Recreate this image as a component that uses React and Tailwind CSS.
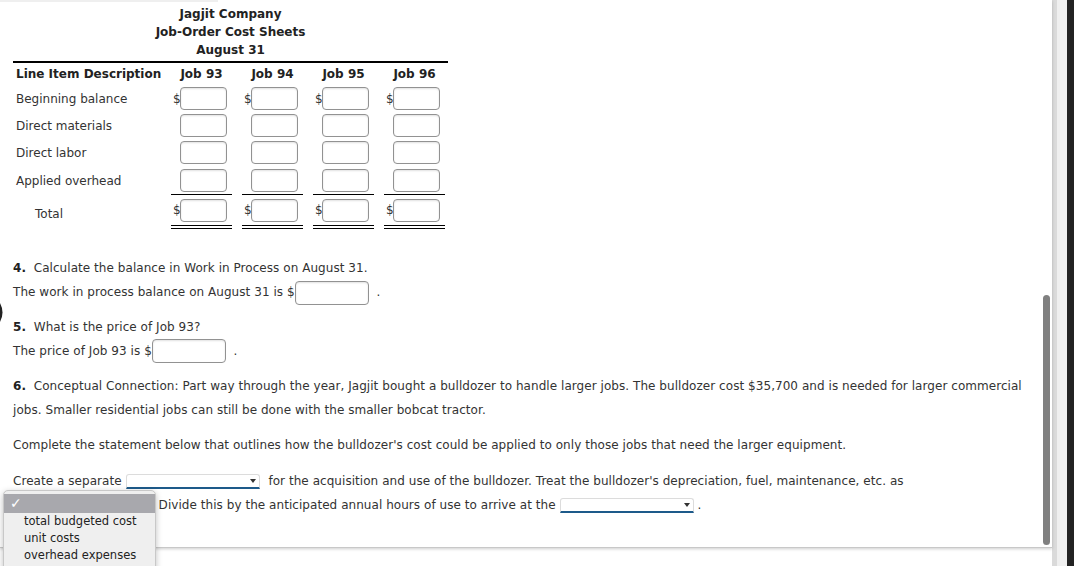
import React from 'react';

const jobs = ['Job 93', 'Job 94', 'Job 95', 'Job 96'];
const rows = [
  { label: 'Beginning balance', dollar: true, h: 'h-[27px]' },
  { label: 'Direct materials', h: 'h-[27px]' },
  { label: 'Direct labor', h: 'h-[27px]' },
  { label: 'Applied overhead', h: 'h-[29px]', line: true },
];

function Cell({ dollar }) {
  return (
    <div className="flex h-full items-center pl-[2px]">
      <span className="w-[7px] leading-none">{dollar ? '$' : ''}</span>
      <span className="block h-[23px] w-[47px] rounded-[4px] border border-[#929292] bg-white shadow-[inset_0_1px_2px_rgba(0,0,0,0.12)]" />
    </div>
  );
}

function Field({ w }) {
  return (
    <span
      className={`inline-block h-[24px] ${w} rounded-[4px] border border-[#929292] bg-white align-middle shadow-[inset_0_1px_2px_rgba(0,0,0,0.12)]`}
    />
  );
}

function Sel({ extra = '' }) {
  return (
    <span
      className={`relative inline-block h-[15px] w-[134px] rounded-t-[3px] border border-[#dcdcdc] border-b-2 border-b-[#1d5a8a] bg-white align-middle ${extra}`}
    >
      <span className="absolute right-[3px] top-[4px] h-0 w-0 border-x-[3.5px] border-t-[4px] border-x-transparent border-t-[#333]" />
    </span>
  );
}

export default function App() {
  return (
    <div className="relative flex h-[566px] w-[1074px] overflow-hidden bg-white font-['DejaVu_Sans',sans-serif] text-[12px] text-[#333]">
      <div className="flex w-[1052px] flex-col">
        <div className="relative h-[548px] border-b border-[#c8c8c8] pl-[13px] shadow-[0_1px_3px_rgba(0,0,0,0.2)]">
          {/* cost sheet */}
          <div className="w-[437px]">
            <div className="w-[435px] pt-[5px] text-center font-bold leading-[18px] text-[#222]">
              <div>Jagjit Company</div>
              <div>Job-Order Cost Sheets</div>
              <div>August 31</div>
            </div>
            <div className="mt-[2px] w-[435px] border-t-2 border-black" />
            <div className="flex h-[22px] items-center font-bold text-[#222]">
              <div className="w-[153px] pl-[3px]">Line Item Description</div>
              {jobs.map((j) => (
                <div key={j} className="w-[71px] px-[5px] text-center">
                  {j}
                </div>
              ))}
            </div>
            {rows.map((r) => (
              <div key={r.label} className={`flex ${r.h}`}>
                <div className="flex w-[153px] items-center pl-[3px]">{r.label}</div>
                {jobs.map((j) => (
                  <div key={j} className="w-[71px] px-[5px]">
                    <div className={`h-full ${r.line ? 'border-b border-black' : ''}`}>
                      <Cell dollar={r.dollar} />
                    </div>
                  </div>
                ))}
              </div>
            ))}
            <div className="flex h-[34px]">
              <div className="flex w-[153px] items-center pl-[22px] pt-[3px]">Total</div>
              {jobs.map((j) => (
                <div key={j} className="w-[71px] px-[5px]">
                  <div className="h-full border-b-4 border-double border-black">
                    <Cell dollar />
                  </div>
                </div>
              ))}
            </div>
          </div>

          {/* questions */}
          <div className="mt-[27px] leading-[24px] tracking-[0.05px]">
            <div>
              <b className="text-[#222]">4.</b>&nbsp; Calculate the balance in Work in Process on August 31.
            </div>
            <div>
              The work in process balance on August 31 is $<Field w="w-[74px]" />&nbsp; .
            </div>
          </div>

          <div className="mt-[10px] leading-[24px] tracking-[0.05px]">
            <div>
              <b className="text-[#222]">5.</b>&nbsp; What is the price of Job 93?
            </div>
            <div>
              The price of Job 93 is $<Field w="w-[74px]" />&nbsp; .
            </div>
          </div>

          <div className="mt-[11px] leading-[24px] tracking-[0.05px]">
            <b className="text-[#222]">6.</b>&nbsp; Conceptual Connection: Part way through the year, Jagjit bought a bulldozer to handle
            larger jobs. The bulldozer cost $35,700 and is needed for larger commercial
            <br />
            jobs. Smaller residential jobs can still be done with the smaller bobcat tractor.
          </div>

          <div className="mt-[11px] leading-[24px] tracking-[0.05px]">
            Complete the statement below that outlines how the bulldozer's cost could be applied to only those jobs that need
            the larger equipment.
          </div>

          <div className="mt-[12px] leading-[24px] tracking-[0.05px]">
            Create a separate <Sel extra="mr-[5px]" /> for the acquisition and use of the bulldozer. Treat the bulldozer's
            depreciation, fuel, maintenance, etc. as
            <br />
            <Sel /> . Divide this by the anticipated annual hours of use to arrive at the <Sel /> .
          </div>

          {/* scrollbar thumb */}
          <div className="absolute right-[2px] top-[295px] h-[250px] w-[7px] rounded-full bg-[#808080]" />
        </div>
      </div>

      {/* right gutter */}
      <div className="flex w-[22px]">
        <div className="w-[5px] bg-[#dadada]" />
        <div className="w-[10px] bg-[#efefef]" />
        <div className="w-[7px] bg-[#222]" />
      </div>

      {/* faint top bar and left edge mark */}
      <div className="absolute left-0 top-0 h-[2px] w-[218px] bg-[#efefef]" />
      <svg className="absolute left-0 top-[303px]" width="4" height="19" viewBox="0 0 4 19">
        <path d="M0 0 Q5 9.5 0 19 Z" fill="#222" />
      </svg>

      {/* open native select list */}
      <div className="absolute left-[3px] top-[490px] h-[84px] w-[153px] rounded-[5px] border border-[#c8c8c8] bg-[#efefef] pt-[3px] text-[11.5px] text-[#222] shadow-[0_2px_6px_rgba(0,0,0,0.25)]">
        <div className="flex h-[19px] items-center bg-[#a8a8ad] pl-[6px] text-[14px] font-bold text-white">✓</div>
        <div className="flex h-[17px] items-center pl-[20px]">total budgeted cost</div>
        <div className="flex h-[17px] items-center pl-[20px]">unit costs</div>
        <div className="flex h-[17px] items-center pl-[20px]">overhead expenses</div>
      </div>
    </div>
  );
}
